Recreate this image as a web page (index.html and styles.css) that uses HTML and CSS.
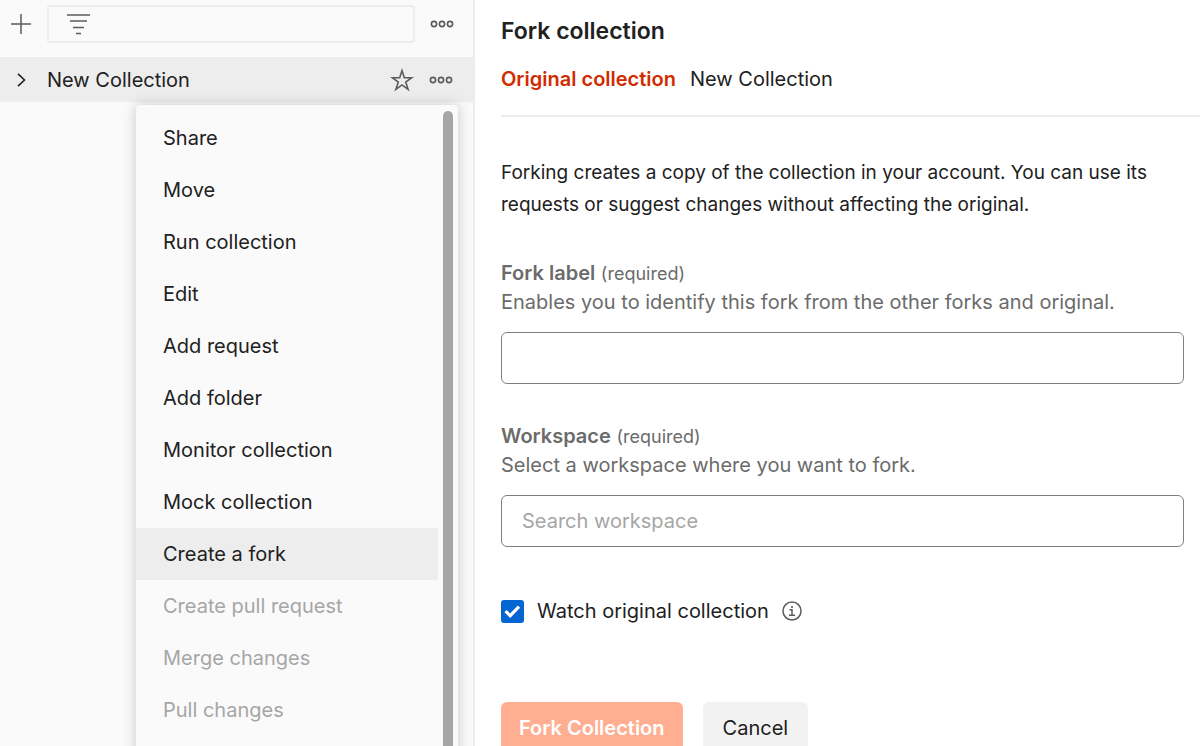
FILE: index.html
```html
<!DOCTYPE html>
<html lang="en">
<head>
<meta charset="utf-8">
<meta name="viewport" content="width=device-width, initial-scale=1">
<title>Fork collection</title>
<link rel="stylesheet" href="styles.css">
</head>
<body>
<div class="app">
  <aside class="sidebar">
    <div class="toolbar">
      <button class="icon-button" type="button" aria-label="Create new">
        <svg width="22" height="22" viewBox="0 0 22 22" fill="none" stroke="#5c5c5c" stroke-width="1.5"><path d="M11 1v20M1 11h20"/></svg>
      </button>
      <div class="filter">
        <svg width="24" height="22" viewBox="0 0 24 22" fill="none" stroke="#5c5c5c" stroke-width="1.5"><path d="M0 2h23M3 8h17M6 14.500h11M9 20.500h5"/></svg>
        <input class="filter-input" type="text" aria-label="Filter collections">
      </div>
      <button class="icon-button" type="button" aria-label="More options">
        <svg width="24" height="8" viewBox="0 0 24 8" fill="none" stroke="#5c5c5c" stroke-width="1.600"><circle cx="4" cy="4" r="2.600"/><circle cx="12" cy="4" r="2.600"/><circle cx="20" cy="4" r="2.600"/></svg>
      </button>
    </div>
    <div class="collection">
      <button class="icon-button" type="button" aria-label="Expand collection">
        <svg width="22" height="16" viewBox="0 0 22 16" fill="none" stroke="#212121" stroke-width="1.600"><path d="M8 1.800L14.500 8 8 14.200"/></svg>
      </button>
      <span class="collection-name">New Collection</span>
      <button class="icon-button" type="button" aria-label="Add to favorites">
        <svg width="24" height="24" viewBox="0 0 24 24" fill="none" stroke="#5c5c5c" stroke-width="1.600"><path d="M12 2.600l2.300 7.100h7.500l-6.100 4.400 2.400 7.200L12 16.900l-6.100 4.400 2.400-7.200-6.100-4.400h7.500z"/></svg>
      </button>
      <button class="icon-button" type="button" aria-label="Collection options">
        <svg width="24" height="8" viewBox="0 0 24 8" fill="none" stroke="#5c5c5c" stroke-width="1.600"><circle cx="4" cy="4" r="2.600"/><circle cx="12" cy="4" r="2.600"/><circle cx="20" cy="4" r="2.600"/></svg>
      </button>
      <div class="menu">
        <div class="menu-items" role="menu">
          <button class="menu-item" type="button" role="menuitem">Share</button>
          <button class="menu-item" type="button" role="menuitem">Move</button>
          <button class="menu-item" type="button" role="menuitem">Run collection</button>
          <button class="menu-item" type="button" role="menuitem">Edit</button>
          <button class="menu-item" type="button" role="menuitem">Add request</button>
          <button class="menu-item" type="button" role="menuitem">Add folder</button>
          <button class="menu-item" type="button" role="menuitem">Monitor collection</button>
          <button class="menu-item" type="button" role="menuitem">Mock collection</button>
          <button class="menu-item active" type="button" role="menuitem">Create a fork</button>
          <button class="menu-item" type="button" role="menuitem" disabled>Create pull request</button>
          <button class="menu-item" type="button" role="menuitem" disabled>Merge changes</button>
          <button class="menu-item" type="button" role="menuitem" disabled>Pull changes</button>
        </div>
        <div class="menu-scrollbar"></div>
      </div>
    </div>
  </aside>

  <main class="main">
    <header class="header">
      <h1 class="title">Fork collection</h1>
      <p class="origin"><strong class="origin-label">Original collection</strong><span>New Collection</span></p>
    </header>
    <form class="form">
      <p class="intro">Forking creates a copy of the collection in your account. You can use its requests or suggest changes without affecting the original.</p>
      <div class="field">
        <label class="field-label" for="fork-label"><strong>Fork label</strong> <span class="required">(required)</span></label>
        <p class="hint" id="fork-hint">Enables you to identify this fork from the other forks and original.</p>
        <input class="text-input" id="fork-label" type="text" aria-describedby="fork-hint">
      </div>
      <div class="field">
        <label class="field-label" for="workspace"><strong>Workspace</strong> <span class="required">(required)</span></label>
        <p class="hint" id="workspace-hint">Select a workspace where you want to fork.</p>
        <input class="text-input" id="workspace" type="text" placeholder="Search workspace" aria-describedby="workspace-hint">
      </div>
      <div class="watch">
        <span class="check">
          <input class="check-input" id="watch" type="checkbox" checked>
          <svg class="check-mark" width="23" height="23" viewBox="0 0 23 23" fill="none" stroke="#fff" stroke-width="3.200"><path d="M4.500 11.200l4.700 4.500 8.800-9"/></svg>
        </span>
        <label for="watch">Watch original collection</label>
        <svg width="20" height="20" viewBox="0 0 20 20" fill="none" stroke="#5c5c5c" stroke-width="1.500"><circle cx="10" cy="10" r="9"/><path d="M7.500 8.800H10v5.400M7 14.200h6"/><circle cx="10" cy="6" r="1.100" fill="#5c5c5c" stroke="none"/></svg>
      </div>
      <div class="actions">
        <button class="button primary" type="submit">Fork Collection</button>
        <button class="button" type="button">Cancel</button>
      </div>
    </form>
  </main>
</div>
</body>
</html>
```
FILE: styles.css
```css
* {
  box-sizing: border-box;
}

body {
  margin: 0;
  font-family: Inter, "Liberation Sans", sans-serif;
  font-size: 20px;
  line-height: 32px;
  color: #212121;
  background: #fff;
}

h1,
p {
  margin: 0;
}

strong {
  font-weight: 600;
}

button,
input {
  margin: 0;
  font: inherit;
  color: inherit;
}

svg {
  display: block;
  flex: none;
}

.app {
  display: flex;
  height: 100vh;
  overflow: hidden;
}

.sidebar {
  flex: 0 0 475px;
  min-width: 0;
  background: #fafafa;
  border-right: 2px solid #ededed;
}

.icon-button {
  flex: none;
  padding: 0;
  border: 0;
  background: none;
}

.toolbar {
  display: flex;
  align-items: center;
  gap: 15px;
  padding: 5px 19px 14px 10px;
}

.filter {
  flex: 1;
  min-width: 0;
  display: flex;
  align-items: center;
  gap: 12px;
  padding: 0 18px;
  border: 2px solid #ededed;
  border-radius: 3px;
}

.filter-input {
  flex: 1;
  min-width: 0;
  height: 34px;
  padding: 0;
  border: 0;
  outline: 0;
  background: none;
}

.collection {
  position: relative;
  display: flex;
  align-items: center;
  gap: 15px;
  height: 45px;
  padding: 0 20px 0 10px;
  background: #ededed;
}

.collection-name {
  flex: 1;
}

.menu {
  position: absolute;
  top: 48px;
  right: 15px;
  display: flex;
  gap: 5px;
  width: 322px;
  padding: 6px 5px 0 0;
  border-radius: 4px;
  background: #fafafa;
  box-shadow: 0 0 14px rgba(0, 0, 0, 0.2);
}

.menu-items {
  flex: 1;
  display: flex;
  flex-direction: column;
  padding: 1px 0 52px;
}

.menu-item {
  height: 52px;
  padding: 0 27px;
  border: 0;
  background: none;
  text-align: left;
}

.menu-item.active {
  background: #ededed;
}

.menu-item:disabled {
  color: #a6a6a6;
}

.menu-scrollbar {
  width: 10px;
  border-radius: 5px;
  background: #a6a6a6;
}

.main {
  flex: 1;
  min-width: 0;
  padding-left: 26px;
}

.header {
  padding: 15px 0 20px;
  border-bottom: 2px solid #ededed;
}

.title {
  font-size: 23px;
  font-weight: 600;
  line-height: 32px;
}

.origin {
  display: flex;
  gap: 14px;
  padding-top: 16px;
}

.origin-label {
  color: #d12b00;
}

.form {
  padding: 40px 16px 0 0;
}

.intro {
  font-size: 19px;
}

.field {
  padding-top: 38px;
  color: #6b6b6b;
}

.field-label {
  display: block;
  line-height: 28px;
}

.required {
  font-size: 18px;
}

.hint {
  line-height: 28px;
}

.text-input {
  display: block;
  width: 100%;
  height: 52px;
  margin-top: 16px;
  padding: 0 20px;
  border: 1px solid #808080;
  border-radius: 6px;
  color: #212121;
  background: #fff;
}

.text-input::placeholder {
  color: #a6a6a6;
}

.watch {
  display: flex;
  align-items: center;
  gap: 13px;
  padding-top: 48px;
}

.check {
  position: relative;
}

.check-input {
  display: block;
  width: 23px;
  height: 23px;
  appearance: none;
  border-radius: 3px;
  background: #0265d2;
}

.check-mark {
  position: absolute;
  inset: 0;
  pointer-events: none;
}

.check-input:not(:checked) + .check-mark {
  display: none;
}

.actions {
  display: flex;
  gap: 20px;
  padding-top: 75px;
}

.button {
  height: 52px;
  padding: 0 20px;
  border: 0;
  border-radius: 6px;
  background: #f2f2f2;
}

.button.primary {
  padding: 0 18px;
  font-weight: 600;
  color: #fff;
  background: #ffae91;
}
```
